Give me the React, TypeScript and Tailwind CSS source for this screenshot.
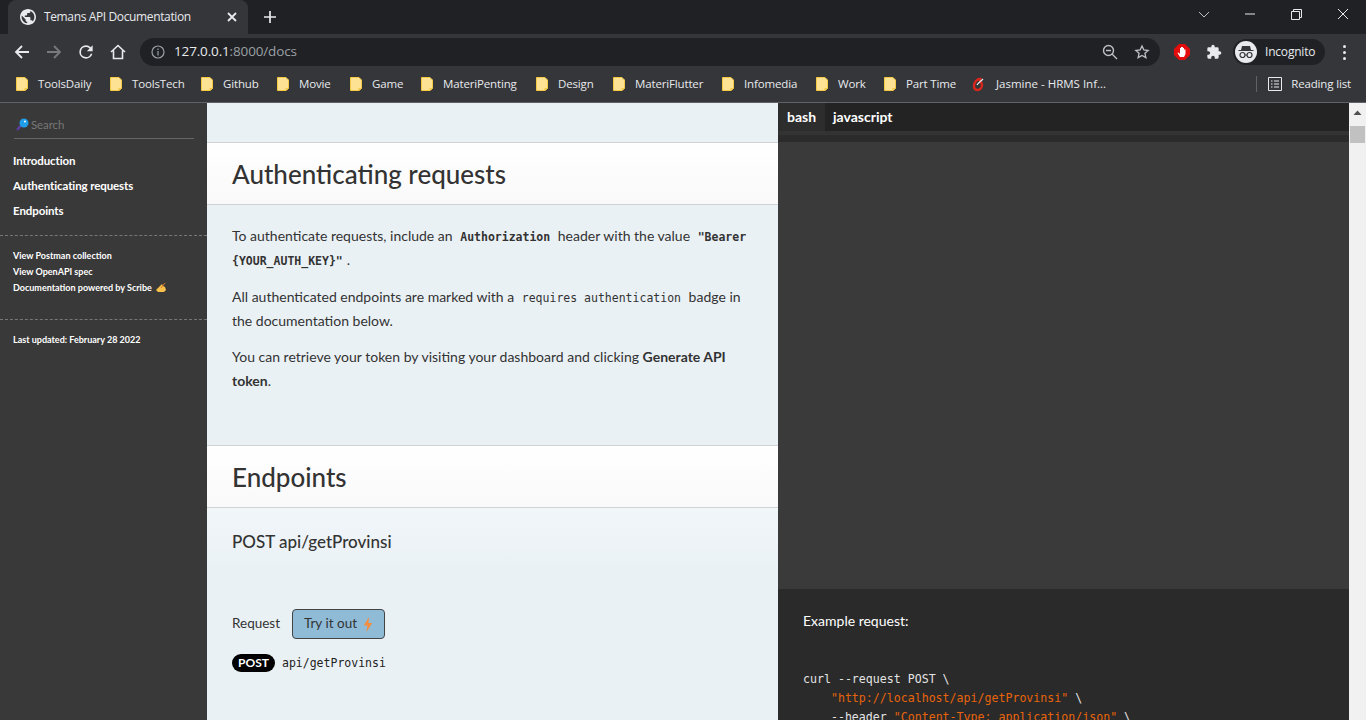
import React from 'react';

const bookmarks = [
  { label: 'ToolsDaily', w: 'w-[94px]' },
  { label: 'ToolsTech', w: 'w-[91px]' },
  { label: 'Github', w: 'w-[76px]' },
  { label: 'Movie', w: 'w-[73px]' },
  { label: 'Game', w: 'w-[71px]' },
  { label: 'MateriPenting', w: 'w-[115px]' },
  { label: 'Design', w: 'w-[77px]' },
  { label: 'MateriFlutter', w: 'w-[109px]' },
  { label: 'Infomedia', w: 'w-[94px]' },
  { label: 'Work', w: 'w-[68px]' },
  { label: 'Part Time', w: 'w-[87px]' },
];

const FolderIcon = () => (
  <svg width="12" height="14" viewBox="0 0 12 14" className="shrink-0">
    <path d="M0.5 0.500H9L11.500 3V11.500L9 13.500H0.500Z" fill="#fde293" stroke="#f6c944" />
    <path d="M8.500 13.500V11H11.500Z" fill="#f6c944" />
  </svg>
);

const GlobeIcon = () => (
  <svg width="16" height="16" viewBox="2 2 20 20" fill="#e8eaed">
    <path d="M12 2C6.48 2 2 6.48 2 12s4.48 10 10 10 10-4.48 10-10S17.52 2 12 2zm-1 17.93c-3.95-.49-7-3.85-7-7.93 0-.62.08-1.21.21-1.79L9 15v1c0 1.1.9 2 2 2v1.93zm6.9-2.54c-.26-.81-1-1.39-1.9-1.39h-1v-3c0-.55-.45-1-1-1H8v-2h2c.55 0 1-.45 1-1V7h2c1.1 0 2-.9 2-2v-.41c2.93 1.19 5 4.06 5 7.41 0 2.08-.8 3.97-2.1 5.39z" />
  </svg>
);

const TabStrip = () => (
  <div className="h-[34px] bg-[#202124] flex items-end relative">
    <div className="ml-2 w-[240px] h-[34px] bg-[#35363a] rounded-t-lg flex items-center pl-3 pr-2 text-[#e8eaed] relative">
      <GlobeIcon />
      <span className="ml-[8px] text-[12px] tracking-[-0.37px] leading-none">Temans API Documentation</span>
      <svg width="10" height="10" viewBox="0 0 10 10" className="ml-auto mr-[3px]" stroke="#e8eaed" strokeWidth="1.8">
        <path d="M1 1L9 9M9 1L1 9" />
      </svg>
    </div>
    <svg width="12" height="12" viewBox="0 0 12 12" className="ml-[16px] mb-[11px]" stroke="#e8eaed" strokeWidth="1.7">
      <path d="M6 0V12M0 6H12" />
    </svg>
    <div className="ml-auto flex items-center h-full self-start text-[#e8eaed]">
      <svg width="12" height="7" viewBox="0 0 12 7" className="mr-[35px] mb-[6px]" fill="none" stroke="#bdc1c6">
        <path d="M1 1L6 6L11 1" />
      </svg>
      <svg width="10" height="10" viewBox="0 0 10 10" className="mr-[36px] mb-[6px]" stroke="#e8eaed">
        <path d="M0 5H10" />
      </svg>
      <svg width="11" height="11" viewBox="0 0 11 11" className="mr-[35px] mb-[6px]" fill="none" stroke="#e8eaed">
        <path d="M0.5 2.5H8.5V10.5H0.5ZM2.5 2.5V0.5H10.5V8.5H8.5" />
      </svg>
      <svg width="12" height="12" viewBox="0 0 12 12" className="mr-[17px] mb-[6px]" stroke="#e8eaed">
        <path d="M1 1L11 11M11 1L1 11" />
      </svg>
    </div>
  </div>
);

const Toolbar = () => (
  <div className="h-[36px] bg-[#35363a] flex items-center text-[#e8eaed]">
    <svg width="16" height="16" viewBox="0 0 16 16" className="ml-[14px]" fill="none" stroke="#e8eaed" strokeWidth="1.8">
      <path d="M15 8H2M8 2L2 8L8 14" />
    </svg>
    <svg width="16" height="16" viewBox="0 0 16 16" className="ml-[16px]" fill="none" stroke="#77797d" strokeWidth="1.8">
      <path d="M1 8H14M8 2L14 8L8 14" />
    </svg>
    <svg width="20" height="20" viewBox="0 0 24 24" className="ml-[14px]" fill="#e8eaed">
      <path d="M17.65 6.35A7.96 7.96 0 0 0 12 4a8 8 0 1 0 7.73 10h-2.08A6 6 0 1 1 12 6c1.66 0 3.14.69 4.22 1.78L13 11h7V4l-2.35 2.35z" />
    </svg>
    <svg width="16" height="16" viewBox="0 0 16 16" className="ml-[14px]" fill="none" stroke="#e8eaed" strokeWidth="1.6">
      <path d="M1 8L8 1.5L15 8M3.5 6.5V14.5H12.5V6.5" />
    </svg>
    <div className="ml-[14px] w-[1020px] h-[28px] bg-[#202124] rounded-full flex items-center pl-[11px] pr-[10px]">
      <svg width="14" height="14" viewBox="0 0 14 14" fill="none" stroke="#9aa0a6" strokeWidth="1.2">
        <circle cx="7" cy="7" r="6" />
        <path d="M7 6V10.5M7 3.5V5" />
      </svg>
      <span className="ml-[9px] text-[13.500px] tracking-[-0.15px] leading-none text-[#e8eaed]">
        127.0.0.1<span className="text-[#9aa0a6]">:8000/docs</span>
      </span>
      <svg width="16" height="16" viewBox="0 0 16 16" className="ml-auto" fill="none" stroke="#bdc1c6" strokeWidth="1.4">
        <circle cx="6.5" cy="6.5" r="5" />
        <path d="M4 6.5H9M10 10L15 15" />
      </svg>
      <svg width="16" height="16" viewBox="0 0 24 24" className="ml-[16px]" fill="none" stroke="#bdc1c6" strokeWidth="2">
        <path d="M12 3l2.8 6 6.4.7-4.8 4.3 1.4 6.5L12 17.2l-5.8 3.3 1.4-6.5L2.8 9.700l6.400-.7z" />
      </svg>
    </div>
    <svg width="16" height="16" viewBox="0 0 16 16" className="ml-[14px]">
      <path d="M5 0H11L16 5V11L11 16H5L0 11V5Z" fill="#e30d0d" />
      <path d="M6 13L3.500 9L4.500 8.500L6 10V4H7V3H8V3H9V4H10V5.500H11.500V10L10 13Z" fill="#fff" />
    </svg>
    <svg width="16" height="16" viewBox="0 0 24 24" className="ml-[16px]" fill="#e8eaed">
      <path d="M20.500 11H19V7a2 2 0 0 0-2-2h-4V3.500a2.500 2.500 0 0 0-5 0V5H4a2 2 0 0 0-2 2v3.800h1.500a2.700 2.700 0 0 1 0 5.400H2V20a2 2 0 0 0 2 2h3.800v-1.500a2.700 2.700 0 0 1 5.400 0V22H17a2 2 0 0 0 2-2v-4h1.500a2.500 2.500 0 0 0 0-5z" />
    </svg>
    <div className="ml-[11px] w-[92px] h-[26px] bg-[#202124] rounded-full flex items-center pl-[2px]">
      <div className="w-[22px] h-[22px] rounded-full bg-[#e8eaed] flex items-center justify-center">
        <svg width="16" height="14" viewBox="0 0 16 14">
          <path d="M4 1H12L13 5H3Z" fill="#35363a" />
          <path d="M0.500 5.500H15.500" stroke="#35363a" />
          <circle cx="4.500" cy="10" r="2.500" fill="none" stroke="#35363a" strokeWidth="1.200" />
          <circle cx="11.500" cy="10" r="2.500" fill="none" stroke="#35363a" strokeWidth="1.200" />
          <path d="M7 10H9" stroke="#35363a" />
        </svg>
      </div>
      <span className="ml-[8px] text-[12px] tracking-[-0.2px] leading-none">Incognito</span>
    </div>
    <div className="ml-[18px] flex flex-col gap-[3px]">
      <div className="w-[3px] h-[3px] rounded-full bg-[#e8eaed]" />
      <div className="w-[3px] h-[3px] rounded-full bg-[#e8eaed]" />
      <div className="w-[3px] h-[3px] rounded-full bg-[#e8eaed]" />
    </div>
  </div>
);

const BookmarksBar = () => (
  <div className="h-[33px] pb-[4px] bg-[#35363a] border-b border-[#5f6368] flex items-center pl-4 text-[11.500px] tracking-[-0.15px] text-[#e8eaed]">
    {bookmarks.map((b) => (
      <div key={b.label} className={`flex items-center shrink-0 ${b.w}`}>
        <FolderIcon />
        <span className="ml-[10px] whitespace-nowrap">{b.label}</span>
      </div>
    ))}
    <div className="flex items-center shrink-0">
      <svg width="16" height="16" viewBox="0 0 16 16" fill="none">
        <path d="M3 10C3 6 6 3 9 3C8 5 11 6 11 9C11 12 9 14 6.500 14C4.500 14 3 12.500 3 10Z" stroke="#d8261c" strokeWidth="2.400" />
        <path d="M6 9C7 7 9 6 12 3" stroke="#e8eaed" strokeWidth="1.200" />
      </svg>
      <span className="ml-[9px] whitespace-nowrap tracking-normal">Jasmine - HRMS Inf...</span>
    </div>
    <div className="ml-auto flex items-center pr-[15px]">
      <div className="w-px h-[16px] bg-[#5f6368] mr-[11px]" />
      <svg width="14" height="14" viewBox="0 0 14 14" fill="none" stroke="#e8eaed">
        <path d="M0.500 0.500H13.500V13.500H0.500ZM3 4H4.500M6 4H11M3 7H4.500M6 7H11M3 10H4.500M6 10H11" />
      </svg>
      <span className="ml-[9px] whitespace-nowrap">Reading list</span>
    </div>
  </div>
);

const Sidebar = () => (
  <aside className="w-[207px] shrink-0 bg-[#393939] text-white text-[11.500px] tracking-[-0.1px] font-bold font-['Lato',sans-serif]">
    <div className="ml-[14px] mr-[13px] h-[36px] border-b border-[#666] flex items-center pt-[8px]">
      <svg width="13" height="13" viewBox="0 0 13 13" className="ml-[2px]">
        <path d="M1 12L5 7.500" stroke="#5b3fa0" strokeWidth="2.500" />
        <circle cx="8" cy="5" r="4.500" fill="#1f9de8" />
        <circle cx="9" cy="3.500" r="1" fill="#fff" />
      </svg>
      <span className="ml-[2px] font-normal text-[#777]">Search</span>
    </div>
    <nav className="mt-[9px] ml-[13px] flex flex-col">
      <a className="h-[25px] leading-[25px]">Introduction</a>
      <a className="h-[25px] leading-[25px]">Authenticating requests</a>
      <a className="h-[25px] leading-[25px]">Endpoints</a>
    </nav>
    <div className="mt-[12px] border-t border-dashed border-[#777] pt-[12px] pl-[13px] text-[9px] tracking-normal leading-[16px]">
      <div>View Postman collection</div>
      <div>View OpenAPI spec</div>
      <div className="flex items-center">
        Documentation powered by Scribe
        <svg width="10" height="10" viewBox="0 0 10 10" className="ml-[4px]">
          <path d="M0 7L4 3L6 1L7 3L9 4L10 7L8 9H2Z" fill="#f8c14b" />
          <path d="M5 5L9 0" stroke="#e2772d" />
        </svg>
      </div>
    </div>
    <div className="mt-[23px] border-t border-dashed border-[#777] pt-[12px] pl-[13px] text-[9px] tracking-normal leading-[16px]">
      Last updated: February 28 2022
    </div>
  </aside>
);

const SectionHeading = ({ children }: { children: React.ReactNode }) => (
  <h1 className="h-[63px] bg-gradient-to-b from-white to-[#f9f9f9] border-y border-[#d0d3d6] pl-[25px] text-[26px] font-medium leading-[62px] text-[#333]">
    {children}
  </h1>
);

const Code = ({ children }: { children: React.ReactNode }) => (
  <code className="font-['DejaVu_Sans_Mono',monospace] text-[11.500px] leading-none font-semibold text-[#333] px-[4px]">{children}</code>
);

const Main = () => (
  <main className="w-[571px] shrink-0 bg-[#eaf1f5] text-[#333] font-['Lato',sans-serif] text-[14px] leading-[23.500px]">
    <div className="h-[39px]" />
    <SectionHeading>Authenticating requests</SectionHeading>
    <div className="h-[240px] px-[25px] pt-[19px]">
      <p>
        To authenticate requests, include an <Code>Authorization</Code> header with the value{' '}
        <Code>"Bearer {'{YOUR_AUTH_KEY}'}"</Code>.
      </p>
      <p className="mt-[14px]">
        All authenticated endpoints are marked with a{' '}
        <code className="font-['DejaVu_Sans_Mono',monospace] text-[11.500px] leading-none px-[4px]">requires authentication</code> badge in the documentation below.
      </p>
      <p className="mt-[13px]">
        You can retrieve your token by visiting your dashboard and clicking <strong className="font-bold">Generate API token</strong>.
      </p>
    </div>
    <SectionHeading>Endpoints</SectionHeading>
    <div className="bg-gradient-to-b from-[#f1f6f9] to-[#eaf1f5] h-[62px] px-[25px] pt-[22px] text-[17px] font-medium">POST api/getProvinsi</div>
    <div className="px-[25px] pt-[39px] flex items-center text-[13.500px]">
      <span className="w-[60px]">Request</span>
      <button className="h-[30px] w-[93px] rounded-[4px] bg-[#8fbbd6] border border-[#444] flex items-center justify-center gap-[6px]">
        Try it out
        <svg width="10" height="15" viewBox="0 0 9 14">
          <path d="M5.500 0L0.500 8H4L3 14L8.500 5.500H5Z" fill="#f58d3d" />
        </svg>
      </button>
    </div>
    <div className="px-[25px] mt-[15px] flex items-center">
      <span className="w-[43px] h-[18px] bg-black text-white rounded-full text-[12px] font-bold leading-[18px] text-center">POST</span>
      <code className="ml-[7px] font-['DejaVu_Sans_Mono',monospace] text-[11.500px] leading-[18px] text-[#222]">api/getProvinsi</code>
    </div>
  </main>
);

const CodePanel = () => (
  <section className="flex-1 min-w-0 bg-[#2a2a2a] flex flex-col overflow-hidden font-['Lato',sans-serif]">
    <div className="h-[28px] shrink-0 bg-[#232323] flex text-[14px] font-bold text-white leading-[28px]">
      <span className="w-[47px] bg-[#2d2d2d] pl-[9px]">bash</span>
      <span className="pl-[8px]">javascript</span>
    </div>
    <div className="h-[11px] shrink-0 bg-[#2b2b2b] border-t-[4px] border-[#333]" />
    <div className="h-[447px] shrink-0 bg-[#3a3a3a]" />
    <div className="px-[25px] pt-[22px] text-[14px] text-white leading-[20px]">Example request:</div>
    <pre className="px-[25px] pt-[39px] text-[11.600px] leading-[19px] text-[#e4e4e4] font-['DejaVu_Sans_Mono',monospace]">
      {'curl --request POST \\\n    '}
      <span className="text-[#e8640b]">"http://localhost/api/getProvinsi"</span>
      {' \\\n    --header '}
      <span className="text-[#e8640b]">"Content-Type: application/json"</span>
      {' \\'}
    </pre>
  </section>
);

const Scrollbar = () => (
  <div className="w-[17px] shrink-0 bg-[#f1f1f1] flex flex-col items-center">
    <svg width="9" height="5" viewBox="0 0 9 5" className="mt-[7px]">
      <path d="M0.500 5L4.500 0.500L8.500 5Z" fill="#505050" />
    </svg>
    <div className="mt-[11px] w-[15px] h-[17px] bg-[#c1c1c1]" />
  </div>
);

export default function App() {
  return (
    <div className="w-[1366px] h-[720px] overflow-hidden flex flex-col font-['Open_Sans',sans-serif]">
      <TabStrip />
      <Toolbar />
      <BookmarksBar />
      <div className="flex-1 min-h-0 flex">
        <Sidebar />
        <Main />
        <CodePanel />
        <Scrollbar />
      </div>
    </div>
  );
}
